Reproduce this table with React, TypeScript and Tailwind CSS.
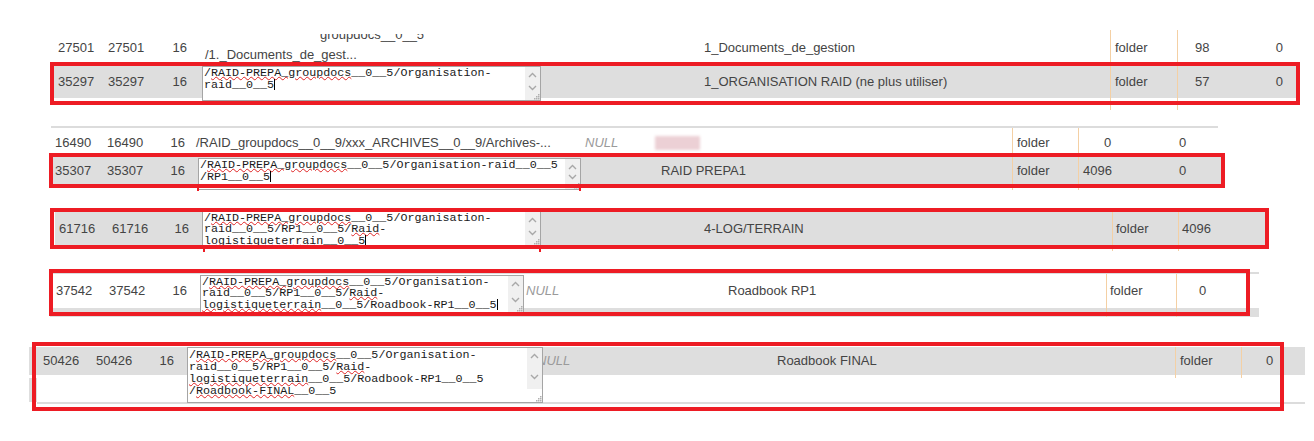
import React from "react";

type Kids = { children?: React.ReactNode };

function C({ c, children }: { c: string } & Kids) {
  return <div className={"flex shrink-0 items-center whitespace-nowrap " + c}>{children}</div>;
}

function Sq({ children }: Kids) {
  return (
    <span className="underline decoration-wavy decoration-[#e02424] decoration-1 underline-offset-[0px]">
      {children}
    </span>
  );
}

function Caret() {
  return <span className="inline-block w-px h-[11px] bg-black align-[-2px]" />;
}

function Up() {
  return (
    <svg width="9" height="6" viewBox="0 0 9 6">
      <path d="M1 5 L4.5 1.5 L8 5" fill="none" stroke="#a8a8a8" strokeWidth="1.4" />
    </svg>
  );
}

function Down() {
  return (
    <svg width="9" height="6" viewBox="0 0 9 6">
      <path d="M1 1 L4.5 4.5 L8 1" fill="none" stroke="#a8a8a8" strokeWidth="1.4" />
    </svg>
  );
}

function Grip() {
  return (
    <svg width="9" height="9" viewBox="0 0 9 9" fill="#b0b0b0">
      <rect x="7" y="3" width="1.5" height="1.5" />
      <rect x="5" y="5" width="1.5" height="1.5" />
      <rect x="7" y="5" width="1.5" height="1.5" />
      <rect x="3" y="7" width="1.5" height="1.5" />
      <rect x="5" y="7" width="1.5" height="1.5" />
      <rect x="7" y="7" width="1.5" height="1.5" />
    </svg>
  );
}

function TA({ cls, lead, track, lines }: { cls: string; lead: string; track: string; lines: React.ReactNode[] }) {
  return (
    <div
      className={
        "relative z-10 flex shrink-0 bg-white border border-[#a5a5a5] font-['Liberation_Mono','Courier_New',monospace] text-[11.7px] text-[#1a1a1a] " +
        cls
      }
    >
      <div className={"flex-1 overflow-hidden whitespace-pre pl-[1px] " + lead}>
        {lines.map((l, i) => (
          <div key={i}>{l}</div>
        ))}
      </div>
      <div className="flex w-[15px] flex-col">
        <div className={"flex flex-col items-center justify-between bg-[#f0f0f0] pt-[5px] pb-[9px] " + track}>
          <Up />
          <Down />
        </div>
      </div>
      <div className="absolute right-0 bottom-0">
        <Grip />
      </div>
    </div>
  );
}

const L1 = (
  <>
    /<Sq>RAID-PREPA_groupdocs</Sq>__0__5/Organisation-
  </>
);
const L2raid = (
  <>
    raid__0__5/RP1__0__5/<Sq>Raid</Sq>-
  </>
);

function Red({ cls }: { cls: string }) {
  return <div className={"pointer-events-none absolute z-20 border-4 border-[#ed1c24] " + cls} />;
}

export default function App() {
  return (
    <div className="h-[441px] w-[1314px] overflow-hidden bg-white font-['Liberation_Sans',Arial,sans-serif] text-[13px] text-[#444]">
      {/* Block 1 */}
      <div className="relative mt-[30px] pl-[52px]">
        <div className="flex h-[36px] w-[1245px] overflow-hidden">
          <C c="w-[52px] pl-[6px]">27501</C>
          <C c="w-[50px] pl-[4px]">27501</C>
          <C c="w-[36px] justify-end pr-[3px]">16</C>
          <div className="flex w-[360px] shrink-0 flex-col whitespace-nowrap pl-[15px] leading-[16px]">
            <div className="mt-[4px] h-[9px] overflow-hidden pl-[115px]">
              <div className="-mt-[7px]">groupdocs__0__5</div>
            </div>
            <div className="mt-[4px]">/1._Documents_de_gest...</div>
          </div>
          <C c="w-[560px] pl-[154px]">1_Documents_de_gestion</C>
          <C c="w-[67px] border-l border-[#f4d0a4] pl-[4px]">folder</C>
          <C c="w-[60px] border-l border-[#f4d0a4] pl-[17px]">98</C>
          <C c="w-[60px] justify-end pr-[14px]">0</C>
        </div>
        <div className="flex h-[32px] w-[1245px] bg-[#dedede]">
          <C c="w-[52px] pl-[6px]">35297</C>
          <C c="w-[50px] pl-[4px]">35297</C>
          <C c="w-[36px] justify-end pr-[3px]">16</C>
          <div className="flex w-[360px] shrink-0 items-start pl-[12px]">
            <TA
              cls="w-[339px] h-[35px]"
              lead="leading-[10.5px] pt-[1px]"
              track="h-full"
              lines={[L1, <>raid__0__5<Caret /></>]}
            />
          </div>
          <C c="w-[560px] pl-[154px]">1_ORGANISATION RAID (ne plus utiliser)</C>
          <C c="w-[67px] border-l border-[#f4d0a4] pl-[4px]">folder</C>
          <C c="w-[60px] border-l border-[#f4d0a4] pl-[17px]">57</C>
          <C c="w-[60px] justify-end pr-[14px]">0</C>
        </div>
        <div className="flex h-[12px]">
          <div className="w-[1058px] shrink-0" />
          <div className="w-[67px] shrink-0 border-l border-[#f4d0a4]" />
          <div className="w-[60px] shrink-0 border-l border-[#f4d0a4]" />
        </div>
        <Red cls="left-[50px] top-[32px] h-[43px] w-[1250px]" />
      </div>

      {/* Block 2 */}
      <div className="relative mt-[16px] pl-[51px]">
        <div className="flex h-[31px] w-[1167px] border-t-2 border-[#dcdcdc]">
          <C c="w-[53px] pl-[4px]">16490</C>
          <C c="w-[53px] pl-[3px]">16490</C>
          <C c="w-[31px] justify-end pr-[3px]">16</C>
          <C c="w-[392px] pl-[8px] overflow-hidden">/RAID_groupdocs__0__9/xxx_ARCHIVES__0__9/Archives-...</C>
          <C c="w-[70px] pl-[5px] italic text-[#9a9a9a]">NULL</C>
          <C c="w-[362px] pl-[5px]">
            <div className="h-[14px] w-[45px] bg-[#ecd0d5] blur-[1.5px]" />
          </C>
          <C c="w-[66px] border-l border-[#f4d0a4] pl-[4px]">folder</C>
          <C c="w-[66px] border-l border-[#f4d0a4] pl-[25px]">0</C>
          <C c="w-[74px] pl-[35px]">0</C>
        </div>
        <div className="flex h-[28px] w-[1171px] bg-[#dedede]">
          <C c="w-[53px] pl-[4px]">35307</C>
          <C c="w-[53px] pl-[3px]">35307</C>
          <C c="w-[31px] justify-end pr-[3px]">16</C>
          <div className="flex w-[392px] shrink-0 items-start pl-[10px]">
            <TA
              cls="w-[383px] h-[32px] mt-[1px]"
              lead="leading-[12px] pt-0"
              track="h-full"
              lines={[
                <>
                  /<Sq>RAID-PREPA_groupdocs</Sq>__0__5/Organisation-raid__0__5
                </>,
                <>/RP1__0__5<Caret /></>,
              ]}
            />
          </div>
          <C c="w-[70px]">{""}</C>
          <C c="w-[362px] pl-[11px]">RAID PREPA1</C>
          <C c="w-[66px] border-l border-[#f4d0a4] pl-[4px]">folder</C>
          <C c="w-[66px] border-l border-[#f4d0a4] pl-[4px]">4096</C>
          <C c="w-[78px] pl-[35px]">0</C>
        </div>
        <div className="flex h-[5px]">
          <div className="w-[961px] shrink-0" />
          <div className="w-[66px] shrink-0 border-l border-[#f4d0a4]" />
          <div className="w-[66px] shrink-0 border-l border-[#f4d0a4]" />
        </div>
        <Red cls="left-[49px] top-[27px] h-[35px] w-[1176px]" />
        <div className="absolute left-[197px] top-[62px] z-20 h-[3px] w-[2px] bg-[#ed1c24]" />
        <div className="absolute left-[579px] top-[62px] z-20 h-[3px] w-[2px] bg-[#ed1c24]" />
      </div>

      {/* Block 3 */}
      <div className="relative mt-[22px] pl-[55px]">
        <div className="flex h-[33px] w-[1213px] bg-[#dedede]">
          <C c="w-[52px] pl-[4px]">61716</C>
          <C c="w-[50px] pl-[5px]">61716</C>
          <C c="w-[35px] justify-end pr-[3px]">16</C>
          <div className="flex w-[358px] shrink-0 items-start pl-[10px]">
            <TA
              cls="w-[339px] h-[35px] -mt-[1px]"
              lead="leading-[11px] pt-[1px]"
              track="h-full"
              lines={[L1, L2raid, <><Sq>logistiqueterrain</Sq>__0__5<Caret /></>]}
            />
          </div>
          <C c="w-[562px] pl-[154px]">4-LOG/TERRAIN</C>
          <C c="w-[66px] border-l border-[#f4d0a4] pl-[3px]">folder</C>
          <C c="w-[90px] border-l border-[#f4d0a4] pl-[3px]">4096</C>
        </div>
        <div className="flex h-[6px]">
          <div className="w-[1057px] shrink-0" />
          <div className="w-[66px] shrink-0 border-l border-[#f4d0a4]" />
          <div className="w-[20px] shrink-0 border-l border-[#f4d0a4]" />
        </div>
        <Red cls="left-[50px] -top-[4px] h-[41px] w-[1219px]" />
        <div className="absolute left-[203px] top-[37px] z-20 h-[3px] w-[2px] bg-[#ed1c24]" />
        <div className="absolute left-[539px] top-[37px] z-20 h-[3px] w-[2px] bg-[#ed1c24]" />
      </div>

      {/* Block 4 */}
      <div className="relative mt-[21px] pl-[50px]">
        <div className="flex h-[36px] w-[1209px] border-t-2 border-[#dcdcdc]">
          <C c="w-[54px] pl-[6px]">37542</C>
          <C c="w-[52px] pl-[5px]">37542</C>
          <C c="w-[34px] justify-end pr-[3px]">16</C>
          <div className="flex w-[334px] shrink-0 items-start pl-[10px]">
            <TA
              cls="w-[324px] h-[38px] mt-[1px]"
              lead="leading-[11px] pt-[1px]"
              track="h-full"
              lines={[L1, L2raid, <><Sq>logistiqueterrain</Sq>__0__5/Roadbook-RP1__0__5<Caret /></>]}
            />
          </div>
          <C c="w-[82px] pl-[2px] italic text-[#9a9a9a]">NULL</C>
          <C c="w-[500px] pl-[122px]">Roadbook RP1</C>
          <C c="w-[70px] border-l border-[#f4d0a4] pl-[3px]">folder</C>
          <C c="w-[83px] border-l border-[#f4d0a4] pl-[22px]">0</C>
        </div>
        <div className="flex h-[9px] w-[1209px] bg-[#dedede]">
          <div className="w-[1056px] shrink-0" />
          <div className="w-[70px] shrink-0 border-l border-[#f4d0a4]" />
          <div className="w-[83px] shrink-0 border-l border-[#f4d0a4]" />
        </div>
        <Red cls="left-[49px] -top-[3px] h-[47px] w-[1201px]" />
      </div>

      {/* Block 5 */}
      <div className="relative mt-[30px] pl-[29px]">
        <div className="flex h-[28px] w-[1276px] bg-[#dedede]">
          <C c="w-[50px] pl-[14px]">50426</C>
          <C c="w-[53px] pl-[17px]">50426</C>
          <C c="w-[45px] justify-end pr-[3px]">16</C>
          <div className="flex w-[360px] shrink-0 items-start pl-[10px]">
            <TA
              cls="w-[356px] h-[56px]"
              lead="leading-[12px] pt-[1px]"
              track="h-[41px]"
              lines={[
                L1,
                L2raid,
                <><Sq>logistiqueterrain</Sq>__0__5/Roadbook-RP1__0__5</>,
                <>/<Sq>Roadbook-FINAL</Sq>__0__5</>,
              ]}
            />
          </div>
          <C c="w-[80px] italic text-[#9a9a9a]">NULL</C>
          <C c="w-[558px] pl-[160px]">Roadbook FINAL</C>
          <C c="w-[66px] border-l border-[#f4d0a4] pl-[4px]">folder</C>
          <C c="w-[64px] border-l border-[#f4d0a4] pl-[24px]">0</C>
        </div>
        <div className="flex h-[3px]">
          <div className="w-[1146px] shrink-0" />
          <div className="w-[66px] shrink-0 border-l border-[#f4d0a4]" />
          <div className="w-[64px] shrink-0 border-l border-[#f4d0a4]" />
        </div>
        <div className="flex h-[24px]">
          <div className="w-[8px] shrink-0 bg-[#dedede]" />
        </div>
        <div className="ml-[8px] h-[2px] w-[1268px] bg-[#dcdcdc]" />
        <Red cls="left-[32px] -top-[5px] h-[69px] w-[1252px]" />
      </div>
    </div>
  );
}
